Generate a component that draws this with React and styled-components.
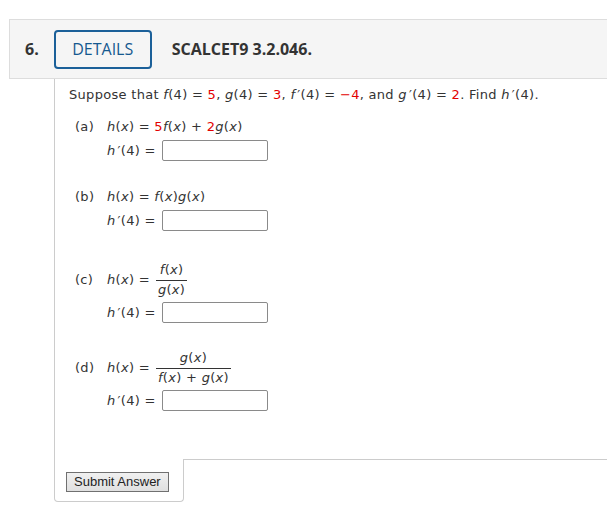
import React from 'react';
import styled, { createGlobalStyle } from 'styled-components';

const GlobalStyle = createGlobalStyle`
  html, body {
    margin: 0;
    padding: 0;
    background: #fff;
  }
`;

const Page = styled.div`
  padding: 19px 0 0 9px;
  font-family: "DejaVu Sans", Verdana, sans-serif;
  color: #333;
`;

const Header = styled.div`
  display: flex;
  align-items: center;
  height: 58px;
  padding-left: 15px;
  background-color: #f5f5f5;
  border: 1px solid #ddd;
  border-right: none;
  font-family: "Open Sans", "Noto Sans", sans-serif;
`;

const Number = styled.span`
  font-size: 16px;
  font-weight: 700;
  color: #333;
`;

const DetailsButton = styled.button`
  width: 98px;
  height: 39px;
  margin-left: 15px;
  border: 2px solid #1b6099;
  border-radius: 4px;
  background: transparent;
  color: #15598f;
  font-family: "Open Sans", "Noto Sans", sans-serif;
  font-size: 16px;
  font-weight: 500;
  cursor: pointer;
`;

const Title = styled.span`
  margin-left: 20px;
  font-size: 16px;
  font-weight: 700;
  color: #333;
`;

const Body = styled.div`
  margin-left: 45px;
`;

const Content = styled.div`
  border-left: 1px solid #ccc;
  padding: 6px 0 48px 14px;
  font-size: 13px;
  letter-spacing: 0.3px;
`;

const Line = styled.div`
  line-height: 20px;
  white-space: nowrap;
`;

const Parts = styled.div`
  margin-left: 6px;
`;

const Part = styled.div`
  display: grid;
  grid-template-columns: 32px auto;
  margin-top: ${({ $top }) => $top}px;
`;

const Label = styled.div`
  display: flex;
  align-items: center;
  line-height: 20px;
`;

const Formula = styled.div`
  display: flex;
  align-items: center;
  min-height: 20px;
  line-height: 20px;
  white-space: nowrap;
`;

const Answer = styled.div`
  grid-column: 2;
  display: flex;
  align-items: center;
  margin-top: 3px;
  white-space: nowrap;
`;

const Input = styled.input`
  width: 106px;
  height: 21px;
  box-sizing: border-box;
  margin-left: 6px;
  border: 1px solid #8a8a8a;
  border-radius: 2px;
  background: #fff;
`;

const Fraction = styled.span`
  display: inline-flex;
  flex-direction: column;
  align-items: center;
  margin-left: 6px;
  line-height: 18px;
`;

const Numerator = styled.span`
  padding: 0 2px 1px;
`;

const Denominator = styled.span`
  align-self: stretch;
  text-align: center;
  border-top: 1px solid #333;
  padding: 0 2px;
`;

const Red = styled.span`
  color: #e30000;
`;

const Var = styled.i`
  font-style: italic;
`;

const Prime = styled.span`
  margin-left: 2px;
`;

const Footer = styled.div`
  display: flex;
`;

const SubmitCell = styled.div`
  padding: 12px 14px 9px 11px;
  border: 1px solid #ccc;
  border-top: none;
  border-radius: 0 0 4px 4px;
`;

const Filler = styled.div`
  flex: 1;
  border-top: 1px solid #ccc;
`;

const SubmitButton = styled.button`
  height: 20px;
  padding: 0 7px;
  border: 1px solid #707070;
  background: linear-gradient(#f0f0f0, #e0e0e0);
  color: #222;
  font-family: "Liberation Sans", Arial, sans-serif;
  font-size: 13px;
  line-height: 18px;
  cursor: pointer;
`;

const F = ({ v = 'f' }) => (
  <>
    <Var>{v}</Var>(<Var>x</Var>)
  </>
);

const HPrime = () => (
  <>
    <Var>h</Var>
    <Prime>′</Prime>(4) =
  </>
);

const AnswerRow = () => (
  <Answer>
    <HPrime />
    <Input type="text" />
  </Answer>
);

export default function App() {
  return (
    <Page>
      <GlobalStyle />
      <Header>
        <Number>6.</Number>
        <DetailsButton>DETAILS</DetailsButton>
        <Title>SCALCET9 3.2.046.</Title>
      </Header>
      <Body>
        <Content>
          <Line>
            Suppose that <Var>f</Var>(4) = <Red>5</Red>, <Var>g</Var>(4) = <Red>3</Red>,{' '}
            <Var>f</Var>
            <Prime>′</Prime>(4) = <Red>−4</Red>, and <Var>g</Var>
            <Prime>′</Prime>(4) = <Red>2</Red>. Find <Var>h</Var>
            <Prime>′</Prime>(4).
          </Line>
          <Parts>
            <Part $top={12}>
              <Label>(a)</Label>
              <Formula>
                <F v="h" />&nbsp;=&nbsp;<Red>5</Red>
                <F />&nbsp;+&nbsp;<Red>2</Red>
                <F v="g" />
              </Formula>
              <AnswerRow />
            </Part>
            <Part $top={26}>
              <Label>(b)</Label>
              <Formula>
                <F v="h" />&nbsp;=&nbsp;<F />
                <F v="g" />
              </Formula>
              <AnswerRow />
            </Part>
            <Part $top={30}>
              <Label>(c)</Label>
              <Formula>
                <F v="h" />&nbsp;=
                <Fraction>
                  <Numerator>
                    <F />
                  </Numerator>
                  <Denominator>
                    <F v="g" />
                  </Denominator>
                </Fraction>
              </Formula>
              <AnswerRow />
            </Part>
            <Part $top={26}>
              <Label>(d)</Label>
              <Formula>
                <F v="h" />&nbsp;=
                <Fraction>
                  <Numerator>
                    <F v="g" />
                  </Numerator>
                  <Denominator>
                    <F /> + <F v="g" />
                  </Denominator>
                </Fraction>
              </Formula>
              <AnswerRow />
            </Part>
          </Parts>
        </Content>
        <Footer>
          <SubmitCell>
            <SubmitButton>Submit Answer</SubmitButton>
          </SubmitCell>
          <Filler />
        </Footer>
      </Body>
    </Page>
  );
}
